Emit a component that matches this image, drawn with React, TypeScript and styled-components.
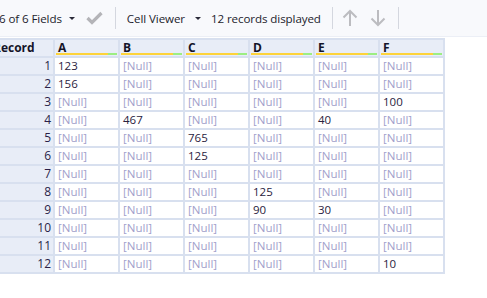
import React from "react";
import styled, { createGlobalStyle } from "styled-components";

const GlobalStyle = createGlobalStyle`
  html, body {
    margin: 0;
    padding: 0;
    background: #ffffff;
  }
  body {
    font-family: "Open Sans", "Noto Sans", "Liberation Sans", sans-serif;
    overflow: hidden;
  }
`;

const Page = styled.div`
  width: 487px;
  height: 298px;
  overflow: hidden;
  background: #ffffff;
`;

const Toolbar = styled.div`
  height: 36px;
  display: flex;
  align-items: center;
  background: #f8f9fc;
  border-bottom: 1px solid #eceff6;
  color: #1c1c2c;
  font-size: 11.6px;
  white-space: nowrap;
`;

const Label = styled.span<{ $ml?: number }>`
  margin-left: ${(p) => p.$ml ?? 0}px;
  letter-spacing: -0.1px;
`;

const Caret = styled.span<{ $ml: number }>`
  width: 0;
  height: 0;
  border-left: 3px solid transparent;
  border-right: 3px solid transparent;
  border-top: 3px solid #2a2a38;
  margin: 1px 0 0 ${(p) => p.$ml}px;
`;

const Sep = styled.span<{ $ml: number }>`
  width: 1px;
  height: 22px;
  background: #d4d7df;
  margin-left: ${(p) => p.$ml}px;
`;

const IconBox = styled.span<{ $ml: number }>`
  display: flex;
  margin-left: ${(p) => p.$ml}px;
`;

const Wrap = styled.div`
  overflow: hidden;
  margin-top: 1px;
`;

const Grid = styled.div`
  display: grid;
  grid-template-columns: 63px repeat(6, 63px);
  grid-auto-rows: 16px;
  gap: 2px;
  padding: 2px;
  width: max-content;
  background: #d8e0ef;
  margin-left: -12px;
`;

const Head = styled.div`
  position: relative;
  background: #e8edf7;
  font-weight: 700;
  font-size: 12px;
  line-height: 16px;
  padding-left: 3px;
  color: #141428;
`;

const Bar = styled.div`
  position: absolute;
  left: 1px;
  right: 1px;
  bottom: 1px;
  height: 2px;
  background: linear-gradient(to right, #fdd33a 0, #fdd33a 85%, #9cee82 85%);
`;

const RecNo = styled.div`
  background: #e8edf7;
  font-size: 12px;
  line-height: 16px;
  text-align: right;
  padding-right: 2px;
  color: #2a1f48;
`;

const Cell = styled.div<{ $null: boolean }>`
  background: #ffffff;
  font-size: 11.5px;
  line-height: 16px;
  padding-left: 3px;
  color: ${(p) => (p.$null ? "#a29fcb" : "#2a2240")};
`;

const cols = ["A", "B", "C", "D", "E", "F"];

const data: (string | null)[][] = [
  ["123", null, null, null, null, null],
  ["156", null, null, null, null, null],
  [null, null, null, null, null, "100"],
  [null, "467", null, null, "40", null],
  [null, null, "765", null, null, null],
  [null, null, "125", null, null, null],
  [null, null, null, null, null, null],
  [null, null, null, "125", null, null],
  [null, null, null, "90", "30", null],
  [null, null, null, null, null, null],
  [null, null, null, null, null, null],
  [null, null, null, null, null, "10"],
];

const Check = () => (
  <svg width="17" height="14" viewBox="0 0 17 14">
    <path d="M1.5 7 L6 11.5 L15.5 2" fill="none" stroke="#b4b4b8" strokeWidth="3.2" />
  </svg>
);

const Arrow = ({ up }: { up: boolean }) => (
  <svg width="16" height="18" viewBox="0 0 16 18" style={{ transform: up ? undefined : "rotate(180deg)" }}>
    <path d="M8 2 V17 M1.5 8.5 L8 2 L14.5 8.5" fill="none" stroke="#bcbcc0" strokeWidth="2" />
  </svg>
);

export default function App() {
  return (
    <Page>
      <GlobalStyle />
      <Toolbar>
        <Label $ml={-1}>6 of 6 Fields</Label>
        <Caret $ml={7} />
        <IconBox $ml={11}>
          <Check />
        </IconBox>
        <Sep $ml={12} />
        <Label $ml={11}>Cell Viewer</Label>
        <Caret $ml={10} />
        <Label $ml={10}>12 records displayed</Label>
        <Sep $ml={11} />
        <IconBox $ml={9}>
          <Arrow up />
        </IconBox>
        <IconBox $ml={12}>
          <Arrow up={false} />
        </IconBox>
        <Sep $ml={12} />
      </Toolbar>
      <Wrap>
        <Grid>
          <Head>Record</Head>
          {cols.map((c) => (
            <Head key={c}>
              {c}
              <Bar />
            </Head>
          ))}
          {data.map((row, i) => (
            <React.Fragment key={i}>
              <RecNo>{i + 1}</RecNo>
              {row.map((v, j) => (
                <Cell key={j} $null={v === null}>
                  {v ?? "[Null]"}
                </Cell>
              ))}
            </React.Fragment>
          ))}
        </Grid>
      </Wrap>
    </Page>
  );
}
